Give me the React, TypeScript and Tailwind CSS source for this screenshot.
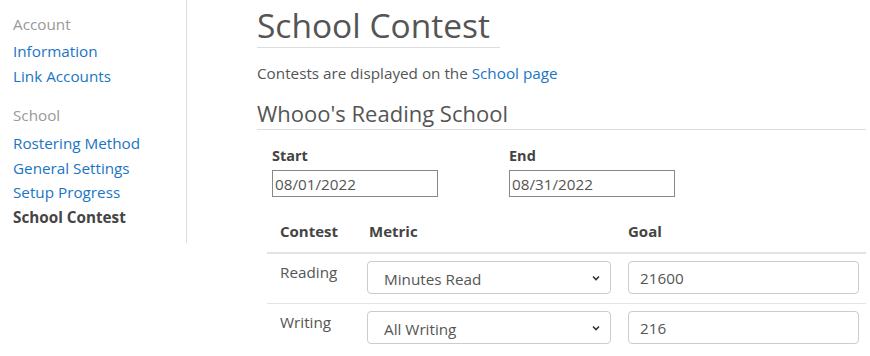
import React from "react";

const font = { fontFamily: "'Open Sans', Lato, sans-serif" };

function Chevron() {
  return (
    <svg width="10" height="10" viewBox="0 0 10 10" className="absolute right-[10px] top-1/2 -translate-y-1/2 pointer-events-none">
      <path d="M2 3.5 L5 6.5 L8 3.5" fill="none" stroke="#333" strokeWidth="1.6" />
    </svg>
  );
}

export default function App() {
  const rows = [
    { contest: "Reading", metric: "Minutes Read", goal: "21600" },
    { contest: "Writing", metric: "All Writing", goal: "216" },
  ];

  return (
    <div className="flex bg-white text-[#555] w-[870px] h-[356px] overflow-hidden" style={font}>
      <aside className="w-[187px] h-[243px] border-r border-[#ddd] pl-[13px] pt-[12px] shrink-0">
        <div className="text-[15.25px] leading-[24px] text-[#999]">Account</div>
        <div className="mt-[3px] flex flex-col text-[15.25px] leading-[25px] text-[#1a75c4]">
          <a>Information</a>
          <a>Link Accounts</a>
        </div>
        <div className="mt-[14px] text-[15.25px] leading-[24px] text-[#999]">School</div>
        <div className="mt-[4px] flex flex-col text-[15.25px] leading-[24.5px] text-[#1a75c4]">
          <a>Rostering Method</a>
          <a>General Settings</a>
          <a>Setup Progress</a>
          <a className="font-bold text-[#444]">School Contest</a>
        </div>
      </aside>

      <main className="pl-[70px] w-[679px] shrink-0">
        <h1 className="inline-block text-[33.5px] leading-[44px] pt-[3px] pr-[10px] pb-[0px] border-b border-[#ddd] text-[#555]">
          School Contest
        </h1>
        <p className="mt-[14px] text-[15.25px] leading-[22px]">
          Contests are displayed on the <a className="text-[#1a75c4]">School page</a>
        </p>
        <h2 className="mt-[14px] text-[22px] leading-[30px] pb-[1px] border-b border-[#ddd] w-[609px]">
          Whooo's Reading School
        </h2>

        <div className="flex pl-[15px] mt-[16px]">
          <div className="w-[237px]">
            <div className="font-bold text-[14.5px] leading-[20px] mb-[4px] text-[#444]">Start</div>
            <input
              readOnly
              value="08/01/2022"
              className="w-[166px] h-[27px] border border-[#888] px-[2px] text-[15.25px] text-[#555] outline-none"
            />
          </div>
          <div>
            <div className="font-bold text-[14.5px] leading-[20px] mb-[4px] text-[#444]">End</div>
            <input
              readOnly
              value="08/31/2022"
              className="w-[166px] h-[27px] border border-[#888] px-[2px] text-[15.25px] text-[#555] outline-none"
            />
          </div>
        </div>

        <table className="ml-[10px] mt-[20px] w-[599px] border-collapse">
          <thead>
            <tr className="border-b-2 border-[#e3e3e3]">
              <th className="text-left font-bold text-[15px] leading-[20px] text-[#444] pl-[13px] pb-[11px] pt-[4px] w-[100px]">Contest</th>
              <th className="text-left font-bold text-[15px] leading-[20px] text-[#444] pl-[2px] pb-[11px] pt-[4px] w-[261px]">Metric</th>
              <th className="text-left font-bold text-[15px] leading-[20px] text-[#444] pb-[11px] pt-[4px]">Goal</th>
            </tr>
          </thead>
          <tbody>
            {rows.map((r, i) => (
              <tr key={r.contest} className={i === 0 ? "border-b border-[#e3e3e3]" : ""}>
                <td className="align-top pl-[13px] pt-[8px] text-[15.25px] leading-[20px]">{r.contest}</td>
                <td className="pt-[7px] pb-[9px]">
                  <div className="relative w-[244px]">
                    <select
                      defaultValue={r.metric}
                      className="appearance-none w-full h-[33px] border border-[#ccc] rounded-[4px] pl-[16px] pt-[4px] text-[15.25px] text-[#555] bg-white outline-none"
                    >
                      <option>{r.metric}</option>
                    </select>
                    <Chevron />
                  </div>
                </td>
                <td className="pt-[7px] pb-[9px]">
                  <input
                    readOnly
                    value={r.goal}
                    className="w-[231px] h-[33px] border border-[#ccc] rounded-[4px] px-[11px] text-[15.25px] text-[#555] outline-none"
                  />
                </td>
              </tr>
            ))}
          </tbody>
        </table>
      </main>
    </div>
  );
}
